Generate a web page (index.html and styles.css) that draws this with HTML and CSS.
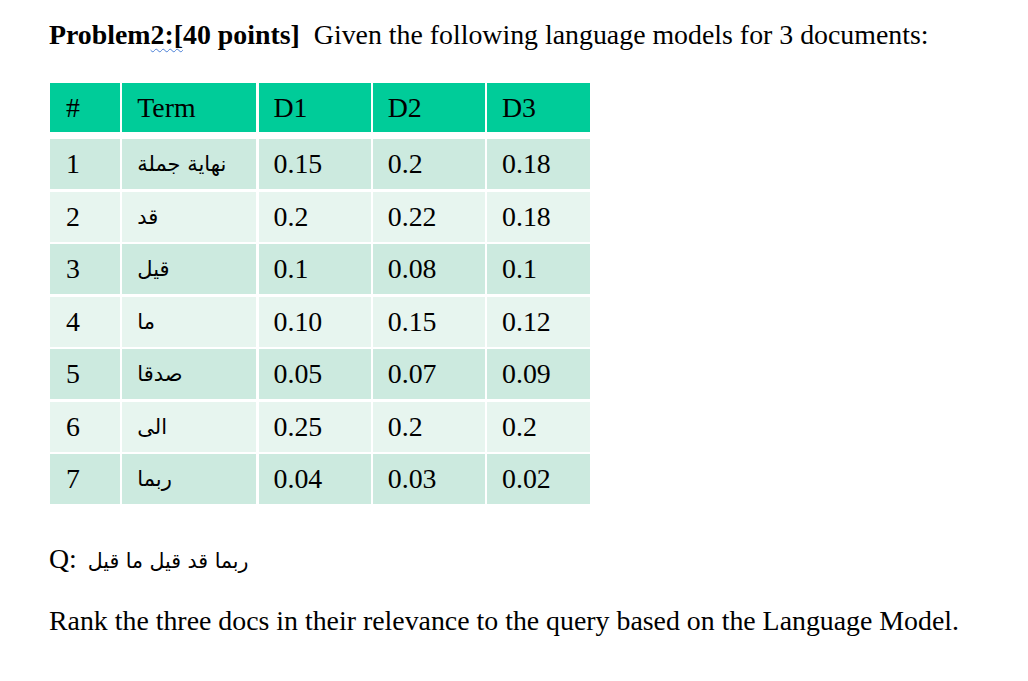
FILE: index.html
```html
<!DOCTYPE html>
<html>
<head>
<meta charset="utf-8">
<link rel="stylesheet" href="styles.css">
</head>
<body>
<div class="page">
  <p class="title"><b>Problem<span class="spell">2:[</span>40 points]</b>&nbsp; Given the following language models for 3 documents:</p>
  <div class="table">
    <div class="row head">
      <div class="cell c1">#</div><div class="cell c2">Term</div><div class="cell c3">D1</div><div class="cell c4">D2</div><div class="cell c5">D3</div>
    </div>
    <div class="body">
      <div class="row odd"><div class="cell c1">1</div><div class="cell c2 ar">نهاية جملة</div><div class="cell c3">0.15</div><div class="cell c4">0.2</div><div class="cell c5">0.18</div></div>
      <div class="row even"><div class="cell c1">2</div><div class="cell c2 ar">قد</div><div class="cell c3">0.2</div><div class="cell c4">0.22</div><div class="cell c5">0.18</div></div>
      <div class="row odd"><div class="cell c1">3</div><div class="cell c2 ar">قيل</div><div class="cell c3">0.1</div><div class="cell c4">0.08</div><div class="cell c5">0.1</div></div>
      <div class="row even"><div class="cell c1">4</div><div class="cell c2 ar">ما</div><div class="cell c3">0.10</div><div class="cell c4">0.15</div><div class="cell c5">0.12</div></div>
      <div class="row odd"><div class="cell c1">5</div><div class="cell c2 ar">صدقا</div><div class="cell c3">0.05</div><div class="cell c4">0.07</div><div class="cell c5">0.09</div></div>
      <div class="row even"><div class="cell c1">6</div><div class="cell c2 ar">الى</div><div class="cell c3">0.25</div><div class="cell c4">0.2</div><div class="cell c5">0.2</div></div>
      <div class="row odd"><div class="cell c1">7</div><div class="cell c2 ar">ربما</div><div class="cell c3">0.04</div><div class="cell c4">0.03</div><div class="cell c5">0.02</div></div>
    </div>
  </div>
  <p class="query">Q: <bdi class="ar" dir="rtl">ربما قد قيل ما قيل</bdi></p>
  <p class="task">Rank the three docs in their relevance to the query based on the Language Model.</p>
</div>
</body>
</html>
```
FILE: styles.css
```css
html, body {
  margin: 0;
  padding: 0;
  background: #ffffff;
}
.page {
  padding: 19px 0 0 49px;
  font-family: "Liberation Serif", "Times New Roman", serif;
  font-size: 27.85px;
  line-height: 32px;
  color: #000;
}
.title {
  margin: 0;
  white-space: nowrap;
}
.spell {
  text-decoration: underline wavy #4a7fd6;
  text-decoration-thickness: 1px;
  text-underline-offset: 4px;
}
.table {
  margin: 32px 0 0 1px;
  width: 540px;
  display: flex;
  flex-direction: column;
  gap: 7px;
}
.body {
  display: flex;
  flex-direction: column;
  gap: 2.5px;
}
.row {
  display: grid;
  grid-template-columns: 70px 134px 112px 112px 103px;
  column-gap: 2.25px;
}
.head { height: 49px; }
.body .row { height: 50px; }
.cell {
  display: flex;
  align-items: center;
  padding-left: 16px;
}
.head .cell { background: #00cc99; }
.odd .cell { background: #cceadf; }
.even .cell { background: #e7f5ef; }
.c1 { padding-left: 16px; }
.c2 { padding-left: 15px; }
.c3, .c4, .c5 { padding-left: 15px; }
.ar {
  font-family: "DejaVu Sans", sans-serif;
  font-size: 21px;
}
.c2.ar { direction: rtl; justify-content: flex-end; }
.query {
  margin: 39px 0 0 0;
  word-spacing: 4px;
}
.query .ar { font-size: 20.5px; word-spacing: 0; }
.task {
  margin: 28px 0 0 0;
}
```
